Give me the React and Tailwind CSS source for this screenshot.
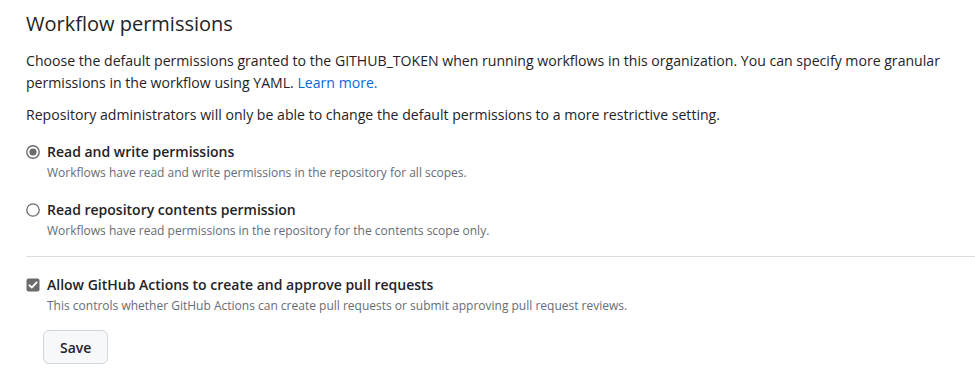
export default function App() {
  return (
    <div
      className="w-[975px] h-[373px] bg-white text-[#1f2328] overflow-hidden"
      style={{ fontFamily: '"Open Sans", "Noto Sans", sans-serif' }}
    >
      <div className="pl-[26px] pt-[8px]">
        <h2 className="text-[20px] leading-[32px] font-normal">Workflow permissions</h2>
        <p className="mt-[10px] text-[14.1px] leading-[22px]">
          Choose the default permissions granted to the GITHUB_TOKEN when running workflows in this organization. You can specify more granular
          <br />
          permissions in the workflow using YAML. <span className="text-[#0969da]">Learn more.</span>
        </p>
        <p className="mt-[10px] text-[14.1px] leading-[22px]">
          Repository administrators will only be able to change the default permissions to a more restrictive setting.
        </p>

        <div className="mt-[15px] flex flex-col gap-[16px]">
          <div className="flex">
            <div className="w-[21px] pt-[4px]">
              <svg width="14" height="14" viewBox="0 0 14 14">
                <circle cx="7" cy="7" r="6.2" fill="white" stroke="#6b6b6b" strokeWidth="1.4" />
                <circle cx="7" cy="7" r="3.6" fill="#6b6b6b" />
              </svg>
            </div>
            <div>
              <div className="text-[14px] leading-[22px] font-semibold">Read and write permissions</div>
              <div className="text-[12px] leading-[20px] text-[#656d76]">
                Workflows have read and write permissions in the repository for all scopes.
              </div>
            </div>
          </div>
          <div className="flex">
            <div className="w-[21px] pt-[4px]">
              <svg width="14" height="14" viewBox="0 0 14 14">
                <circle cx="7" cy="7" r="6.2" fill="white" stroke="#6b6b6b" strokeWidth="1.3" />
              </svg>
            </div>
            <div>
              <div className="text-[14px] leading-[22px] font-semibold">Read repository contents permission</div>
              <div className="text-[12px] leading-[20px] text-[#656d76]">
                Workflows have read permissions in the repository for the contents scope only.
              </div>
            </div>
          </div>
        </div>

        <div className="mt-[15px] border-t border-[#d8dee4]" />

        <div className="mt-[17px] flex">
          <div className="w-[21px] pt-[4px]">
            <svg width="14" height="14" viewBox="0 0 14 14">
              <rect x="0.5" y="0.5" width="13" height="13" rx="2" fill="#6b6b6b" />
              <path d="M3.4 7.2 L5.8 9.6 L10.6 4.4" fill="none" stroke="white" strokeWidth="1.8" strokeLinecap="round" strokeLinejoin="round" />
            </svg>
          </div>
          <div>
            <div className="text-[14px] leading-[22px] font-semibold">Allow GitHub Actions to create and approve pull requests</div>
            <div className="text-[12px] leading-[20px] text-[#656d76]">
              This controls whether GitHub Actions can create pull requests or submit approving pull request reviews.
            </div>
          </div>
        </div>

        <div className="mt-[14px] pl-[17px]">
          <button className="h-[34px] px-[16px] rounded-[6px] border border-[#d0d7de] bg-[#f6f8fa] text-[14px] font-semibold text-[#1f2328]">
            Save
          </button>
        </div>
      </div>
    </div>
  );
}
